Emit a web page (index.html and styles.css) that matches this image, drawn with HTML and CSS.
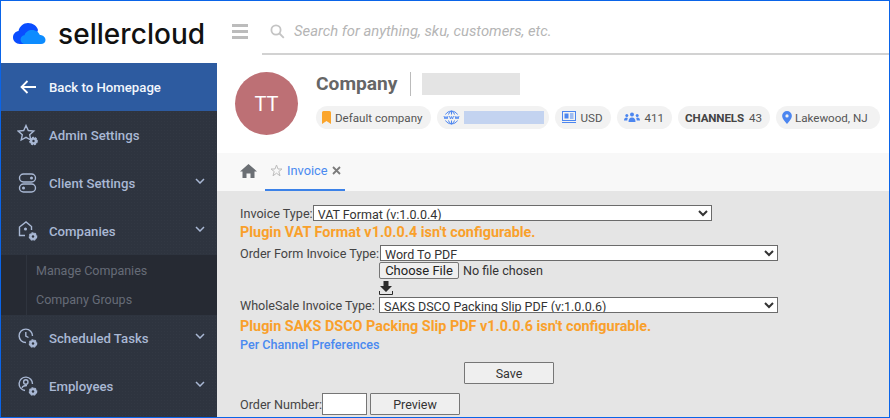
FILE: index.html
```html
<!DOCTYPE html>
<html lang="en">
<head>
    <meta charset="UTF-8">
    <meta name="viewport" content="width=device-width, initial-scale=1.0">
    <title>Invoice</title>
    <link rel="stylesheet" href="styles.css">
</head>
<body>
    <div class="frame">
        <header class="topbar">
            <div class="brand">
                <svg class="brand-icon" width="33" height="22" viewBox="0 0 33 22">
                    <path fill="#0a4dff" d="M7 21C3 21 0 18 0 14.500C0 11 2.500 8.500 5.500 8C6.500 3.500 10.500 0 15 0C20 0 24 3 25 7L20 21Z"/>
                    <path fill="#0d8cff" d="M12 21C9.500 21 7.500 19 7.500 16.500C7.500 14 9.500 12.300 11.500 12.300C12.500 9 15.500 7 19 7C23 7 26 9.500 26.800 12C30 12 32.500 14.300 32.500 17C32.500 19.500 30.500 21 28 21Z"/>
                </svg>
                <span class="brand-name">sellercloud</span>
            </div>
            <div class="burger"><span></span><span></span><span></span></div>
            <div class="search">
                <svg width="15" height="15" viewBox="0 0 15 15" fill="none" stroke="#c4c4c4" stroke-width="1.800">
                    <circle cx="6" cy="6" r="4.600"/>
                    <path d="M9.500 9.500L13.800 13.800"/>
                </svg>
                <span>Search for anything, sku, customers, etc.</span>
            </div>
        </header>

        <div class="layout">
            <nav class="sidebar">
                <a href="#" class="nav-back">
                    <svg width="17" height="14" viewBox="0 0 17 14" fill="none" stroke="#fff" stroke-width="1.800">
                        <path d="M16 7H2M7.500 1L1.500 7L7.500 13"/>
                    </svg>
                    Back to Homepage
                </a>
                <a href="#" class="nav-item">
                    <svg class="nav-icon" width="22" height="22" viewBox="0 0 22 22" fill="none" stroke="#a9b8d4" stroke-width="1.400">
                        <path d="M9 1.500L11.300 6.500L16.800 7.100L12.700 10.800L13.800 16L9 13.300L4.200 16L5.300 10.800L1.200 7.100L6.700 6.500Z"/>
                        <circle cx="16.500" cy="17" r="3.600" fill="#a9b8d4" stroke-dasharray="2 1"/>
                        <circle cx="16.500" cy="17" r="1.200" fill="#2e343f" stroke="none"/>
                    </svg>
                    Admin Settings
                </a>
                <a href="#" class="nav-item">
                    <svg class="nav-icon" width="22" height="22" viewBox="0 0 22 22" fill="none" stroke="#a9b8d4" stroke-width="1.400">
                        <rect x="2.500" y="2" width="16" height="8" rx="4"/>
                        <rect x="2.500" y="12" width="16" height="8" rx="4"/>
                        <circle cx="14.500" cy="6" r=".8" fill="#a9b8d4"/>
                        <circle cx="6.500" cy="16" r=".8" fill="#a9b8d4"/>
                    </svg>
                    Client Settings
                    <svg class="chevron" width="10" height="6" viewBox="0 0 10 6"><path d="M1 1L5 5L9 1" fill="none" stroke="#a9b8d4" stroke-width="1.500"/></svg>
                </a>
                <a href="#" class="nav-item">
                    <svg class="nav-icon" width="22" height="22" viewBox="0 0 22 22" fill="none" stroke="#a9b8d4" stroke-width="1.400">
                        <path d="M8 15.500H2.500V7L9 2L14.500 6.500V10"/>
                        <circle cx="8.500" cy="9" r=".8" fill="#a9b8d4"/>
                        <circle cx="16" cy="16.500" r="3.600" fill="#a9b8d4" stroke-dasharray="2 1"/>
                        <circle cx="16" cy="16.500" r="1.200" fill="#2e343f" stroke="none"/>
                    </svg>
                    Companies
                    <svg class="chevron" width="10" height="6" viewBox="0 0 10 6"><path d="M1 1L5 5L9 1" fill="none" stroke="#a9b8d4" stroke-width="1.500"/></svg>
                </a>
                <div class="subnav">
                    <a href="#">Manage Companies</a>
                    <a href="#">Company Groups</a>
                </div>
                <a href="#" class="nav-item">
                    <svg class="nav-icon" width="22" height="22" viewBox="0 0 22 22" fill="none" stroke="#a9b8d4" stroke-width="1.400">
                        <path d="M9 15.500A6.700 6.700 0 1 1 15.500 9"/>
                        <path d="M8.800 5V9L11.500 10.500"/>
                        <circle cx="16" cy="16.500" r="3.600" fill="#a9b8d4" stroke-dasharray="2 1"/>
                        <circle cx="16" cy="16.500" r="1.200" fill="#2e343f" stroke="none"/>
                    </svg>
                    Scheduled Tasks
                    <svg class="chevron" width="10" height="6" viewBox="0 0 10 6"><path d="M1 1L5 5L9 1" fill="none" stroke="#a9b8d4" stroke-width="1.500"/></svg>
                </a>
                <a href="#" class="nav-item">
                    <svg class="nav-icon" width="22" height="22" viewBox="0 0 22 22" fill="none" stroke="#a9b8d4" stroke-width="1.400">
                        <path d="M8 15.500A6.700 6.700 0 1 1 15.500 9"/>
                        <circle cx="8.800" cy="7" r="2.200"/>
                        <path d="M5 13C5.500 11 7 10.500 10 10.500"/>
                        <circle cx="16" cy="16.500" r="3.600" fill="#a9b8d4" stroke-dasharray="2 1"/>
                        <circle cx="16" cy="16.500" r="1.200" fill="#2e343f" stroke="none"/>
                    </svg>
                    Employees
                    <svg class="chevron" width="10" height="6" viewBox="0 0 10 6"><path d="M1 1L5 5L9 1" fill="none" stroke="#a9b8d4" stroke-width="1.500"/></svg>
                </a>
            </nav>

            <main class="main">
                <section class="company">
                    <div class="avatar">TT</div>
                    <div class="company-info">
                        <div class="company-title">
                            <h1>Company</h1>
                            <div class="redacted-name"></div>
                        </div>
                        <div class="pills">
                            <span class="pill">
                                <svg width="9" height="13" viewBox="0 0 9 13"><path fill="#fba52c" d="M0 1.500Q0 0 1.500 0H7.500Q9 0 9 1.500V13L4.500 10L0 13Z"/></svg>
                                Default company
                            </span>
                            <span class="pill pill-web">
                                <svg width="17" height="15" viewBox="0 0 17 15" fill="none" stroke="#4c86f0">
                                    <path d="M2.500 4.500A7 7 0 0 1 14.500 4.500M2.500 10.500A7 7 0 0 0 14.500 10.500M8.500 1V4.500M8.500 10.500V14M5.500 4.500Q6 2 8.500 1Q11 2 11.500 4.500M5.500 10.500Q6 13 8.500 14Q11 13 11.500 10.500"/>
                                    <path d="M1 6L2 9L3 6.500L4 9L5 6M6.500 6L7.500 9L8.500 6.500L9.500 9L10.500 6M12 6L13 9L14 6.500L15 9L16 6" stroke-width=".9"/>
                                </svg>
                                <span class="redacted-url"></span>
                            </span>
                            <span class="pill pill-wide">
                                <svg width="14" height="13" viewBox="0 0 14 13" fill="none" stroke="#4c86f0">
                                    <rect x=".5" y=".5" width="13" height="9"/>
                                    <rect x="3" y="3" width="3" height="4" fill="#4c86f0"/>
                                    <path d="M8 3H11.500M8 5H11.500M8 7H11.500M0 11.500H14"/>
                                </svg>
                                USD
                            </span>
                            <span class="pill pill-wide">
                                <svg width="16" height="11" viewBox="0 0 16 11" fill="#4c86f0">
                                    <circle cx="8" cy="2.500" r="2"/>
                                    <circle cx="2.800" cy="3.500" r="1.500"/>
                                    <circle cx="13.200" cy="3.500" r="1.500"/>
                                    <path d="M4.500 10Q4.500 5.500 8 5.500Q11.500 5.500 11.500 10ZM0 8.500Q0 5.500 2.800 5.500L3.800 6Q3.300 7 3.300 8.500ZM16 8.500Q16 5.500 13.200 5.500L12.200 6Q12.700 7 12.700 8.500Z"/>
                                </svg>
                                411
                            </span>
                            <span class="pill pill-wide"><b>CHANNELS</b> 43</span>
                            <span class="pill pill-place">
                                <svg width="10" height="13" viewBox="0 0 9 12"><path fill="#4c86f0" fill-rule="evenodd" d="M4.500 0A4.500 4.500 0 0 1 9 4.500C9 7 6.500 9.500 4.500 12C2.500 9.500 0 7 0 4.500A4.500 4.500 0 0 1 4.500 0ZM4.500 3A1.500 1.500 0 1 0 4.500 6A1.500 1.500 0 1 0 4.500 3Z"/></svg>
                                Lakewood, NJ
                            </span>
                        </div>
                    </div>
                </section>

                <div class="tabs">
                    <svg class="home-icon" width="17" height="14" viewBox="0 0 17 14"><path fill="#6b6f74" d="M8.500 0L17 7.500H14.500V14H10.500V9.500H6.500V14H2.500V7.500H0Z"/></svg>
                    <div class="tab">
                        <svg width="13" height="13" viewBox="0 0 13 13"><path fill="none" stroke="#bdbdbd" d="M6.500 1L8 5H12L8.800 7.500L10 11.800L6.500 9.200L3 11.800L4.200 7.500L1 5H5Z"/></svg>
                        <span>Invoice</span>
                        <svg width="9" height="9" viewBox="0 0 9 9"><path stroke="#7b7b7b" stroke-width="1.800" d="M1 1L8 8M8 1L1 8"/></svg>
                    </div>
                </div>

                <form class="invoice-form">
                    <div class="row">
                        <label>Invoice Type:</label>
                        <select class="select-wide"><option>VAT Format (v:1.0.0.4)</option></select>
                    </div>
                    <p class="notice notice-first">Plugin VAT Format v1.0.0.4 isn't configurable.</p>
                    <div class="row row-order">
                        <label>Order Form Invoice Type:</label>
                        <select class="select-mid"><option>Word To PDF</option></select>
                    </div>
                    <div class="file-block">
                        <div class="file-row"><button type="button" class="file-btn">Choose File</button><span>No file chosen</span></div>
                        <svg class="download" width="14" height="14" viewBox="0 0 14 14">
                            <path fill="#2b2b2b" d="M4.500 0H9.500V5H13L7 11L1 5H4.500Z"/>
                            <path fill="none" stroke="#2b2b2b" d="M.5 10V13.500H13.500V10"/>
                        </svg>
                    </div>
                    <div class="row row-wholesale">
                        <label>WholeSale Invoice Type:</label>
                        <select class="select-wide"><option>SAKS DSCO Packing Slip PDF (v:1.0.0.6)</option></select>
                    </div>
                    <p class="notice">Plugin SAKS DSCO Packing Slip PDF v1.0.0.6 isn't configurable.</p>
                    <a href="#" class="link">Per Channel Preferences</a>
                    <div class="save-row"><button type="button" class="btn btn-save">Save</button></div>
                    <div class="row row-number">
                        <label>Order Number:</label>
                        <input type="text" class="order-input">
                        <button type="button" class="btn btn-preview">Preview</button>
                    </div>
                </form>
            </main>
        </div>
    </div>
</body>
</html>
```

FILE: styles.css
```css
* {
    box-sizing: border-box;
}
html, body {
    height: 100%;
}
body {
    margin: 0;
    font-family: Roboto, Arial, sans-serif;
    font-size: 13px;
    color: #444;
    background-color: #fff;
    overflow: hidden;
}
a {
    text-decoration: none;
}
.frame {
    width: 890px;
    height: 418px;
    border: 1px solid #0a64e8;
    overflow: hidden;
    display: flex;
    flex-direction: column;
}

/* top bar */
.topbar {
    height: 62px;
    flex: none;
    display: flex;
    background-color: #fff;
}
.brand {
    width: 216px;
    flex: none;
    display: flex;
    align-items: center;
    padding: 4px 0 0 12px;
}
.brand-icon {
    margin-right: 12px;
}
.brand-name {
    font-family: Inter, Lato, sans-serif;
    font-size: 28px;
    font-weight: 500;
    color: #111;
    letter-spacing: 0.05px;
}
.burger {
    width: 45px;
    flex: none;
    display: flex;
    flex-direction: column;
    gap: 3px;
    padding: 23px 0 0 15px;
}
.burger span {
    display: block;
    width: 16px;
    height: 3px;
    background-color: #bcbcbc;
}
.search {
    flex: 1;
    height: 54px;
    border-bottom: 2px solid #d2d2d2;
    display: flex;
    align-items: center;
    gap: 9px;
    padding: 8px 0 0 8px;
    color: #b5b5b5;
    font-size: 14.800px;
    font-style: italic;
}

.layout {
    flex: 1;
    display: flex;
    min-height: 0;
}

/* sidebar */
.sidebar {
    width: 216px;
    flex: none;
    background-color: #2e343f;
    background-image: radial-gradient(#323843 0.5px, transparent 0.6px);
    background-size: 3px 3px;
}
.nav-back {
    height: 48px;
    display: flex;
    align-items: center;
    padding-left: 19px;
    gap: 12px;
    background-color: #2d5ba0;
    color: #f2f6fc;
    font-size: 13.200px;
    font-weight: 500;
}
.nav-item {
    position: relative;
    height: 48px;
    display: flex;
    align-items: center;
    padding-left: 16px;
    color: #a9b8d4;
    font-size: 13.200px;
    font-weight: 500;
}
.nav-icon {
    margin-right: 10px;
}
.chevron {
    position: absolute;
    right: 12px;
    top: 19px;
}
.subnav {
    height: 60px;
    padding: 1px 0 0 35px;
    background-color: #262a33;
    background-image: linear-gradient(#2f343e, #2f343e);
    background-size: 1px 100%;
    background-position: 25px 0;
    background-repeat: no-repeat;
}
.subnav a {
    display: block;
    height: 29px;
    line-height: 29px;
    color: #666c78;
    font-size: 12.500px;
}
.subnav + .nav-item {
    margin-top: -1px;
}

/* company header */
.main {
    flex: 1;
    min-width: 0;
    display: flex;
    flex-direction: column;
    background-color: #e5e5e5;
}
.company {
    height: 90px;
    flex: none;
    display: flex;
    padding: 9px 0 0 18px;
    background-color: #fff;
}
.avatar {
    width: 63px;
    height: 63px;
    flex: none;
    border-radius: 50%;
    background-color: #bd7075;
    color: #fff;
    font-size: 20px;
    display: flex;
    align-items: center;
    justify-content: center;
}
.company-info {
    margin-left: 18px;
}
.company-title {
    display: flex;
    align-items: stretch;
    height: 24px;
}
.company-title h1 {
    margin: 0;
    padding-right: 13px;
    border-right: 1px solid #bbb;
    font-size: 19.200px;
    line-height: 23px;
    font-weight: 700;
    color: #666;
}
.redacted-name {
    width: 98px;
    height: 22px;
    margin: 1px 0 0 11px;
    background-color: #e4e4e4;
}
.pills {
    display: flex;
    gap: 6px;
    margin-top: 10px;
}
.pill {
    height: 23px;
    display: flex;
    align-items: center;
    gap: 4px;
    padding: 0 8px 0 6px;
    border-radius: 12px;
    background-color: #f2f2f2;
    color: #555;
    font-size: 11.600px;
    white-space: nowrap;
}
.pill b {
    color: #444;
    font-weight: 700;
    letter-spacing: -0.15px;
}
.pill-web {
    padding-right: 5px;
}
.pill-wide {
    gap: 5px;
    padding-left: 7px;
}
.pill-place {
    gap: 3px;
    padding-right: 12px;
}
.redacted-url {
    width: 80px;
    height: 13px;
    background-color: #c3d3f0;
}

/* tabs */
.tabs {
    height: 38px;
    flex: none;
    display: flex;
    background-color: #f8f8f8;
    padding-left: 23px;
}
.home-icon {
    margin-top: 11px;
}
.tab {
    width: 80px;
    margin-left: 8px;
    display: flex;
    align-items: center;
    gap: 4px;
    padding: 0 0 2px 5px;
    border-bottom: 2px solid #3c82e8;
    color: #4a8af0;
    font-size: 12.800px;
}

/* invoice form */
.invoice-form {
    flex: 1;
    padding: 14px 0 0 23px;
    color: #444;
    font-size: 12.600px;
}
.row {
    display: flex;
    align-items: center;
    height: 16px;
}
.row label {
    white-space: nowrap;
}
.row select {
    height: 16px;
    padding: 0;
    border: 1px solid #6b6b6b;
    border-radius: 0;
    background-color: #fff;
    color: #333;
    font-family: Roboto, Arial, sans-serif;
    font-size: 12.500px;
}
.select-wide {
    width: 399px;
}
.select-mid {
    width: 398px;
    margin-left: 1px;
}
.row-wholesale {
    margin-top: 2px;
}
.row-wholesale label {
    width: 139px;
}
.notice {
    margin: 6px 0 4px;
    height: 16px;
    line-height: 16px;
    color: #f9a02b;
    font-size: 14.400px;
    font-weight: 700;
}
.notice-first {
    margin: 4px 0;
}
.file-block {
    margin-left: 139px;
}
.file-row {
    display: flex;
    align-items: center;
    gap: 4px;
    margin-top: 1px;
    color: #333;
}
.file-btn {
    width: 80px;
    height: 17px;
    padding: 0;
    border: 1px solid #767676;
    border-radius: 2px;
    background-color: #efefef;
    color: #222;
    font-family: Roboto, Arial, sans-serif;
    font-size: 13px;
}
.download {
    display: block;
    margin-top: 2px;
}
.link {
    display: block;
    height: 16px;
    line-height: 16px;
    margin-top: -2px;
    color: #4a8af0;
    font-size: 12.600px;
    font-weight: 500;
}
.save-row {
    margin: 9px 0 0 224px;
}
.btn {
    width: 90px;
    height: 22px;
    padding: 0;
    border: 1px solid #767676;
    border-radius: 1px;
    background-color: #efefef;
    color: #333;
    font-family: Roboto, Arial, sans-serif;
    font-size: 12.500px;
}
.row-number {
    height: 22px;
    margin-top: 9px;
}
.order-input {
    width: 45px;
    height: 22px;
    border: 1px solid #767676;
    background-color: #fff;
}
.btn-preview {
    margin-left: 3px;
}
```
